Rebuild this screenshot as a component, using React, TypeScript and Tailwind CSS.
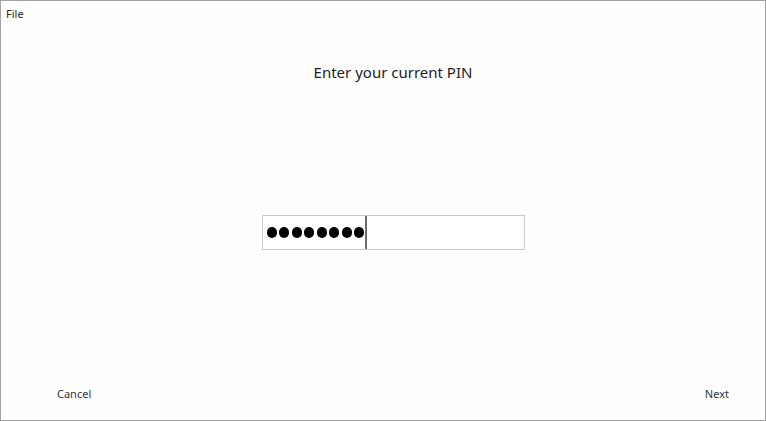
const PIN_LENGTH = 8;

function PinField({ filled }: { filled: number }) {
  return (
    <div className="flex h-[35px] w-[263px] items-center border border-[#c9c9c9] bg-white pl-[4px]">
      <div className="flex items-center gap-[2.5px]">
        {Array.from({ length: filled }).map((_, i) => (
          <span key={i} className="block h-[11px] w-[10px] rounded-full bg-black" />
        ))}
      </div>
      {/* text caret */}
      <span className="ml-[1px] block h-[33px] w-[2px] bg-[#6b6b6b]" />
    </div>
  );
}

export default function App() {
  return (
    <div
      className="flex h-[421px] w-[766px] flex-col border border-[#a3a3a3] bg-[#fefefe] text-[#2b2b2b]"
      style={{ fontFamily: '"Noto Sans", "DejaVu Sans", sans-serif' }}
    >
      <div className="pl-[5px] pt-[6px] text-[11px] leading-[14px]">File</div>

      <div className="flex flex-col items-center pl-[20px]">
        <h1 className="mt-[41px] text-[15px] leading-[20px] text-[#222]">
          Enter your current PIN
        </h1>
        <div className="mt-[133px]">
          <PinField filled={PIN_LENGTH} />
        </div>
      </div>

      <div className="mt-auto flex justify-between pb-[19px] pl-[56px] pr-[36px] text-[11px] leading-[14px] text-[#333]">
        <button>Cancel</button>
        <button>Next</button>
      </div>
    </div>
  );
}
